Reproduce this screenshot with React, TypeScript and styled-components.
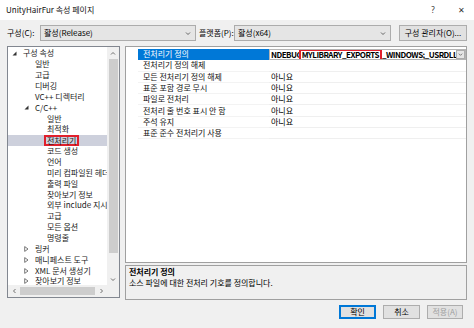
import React from "react";
import styled, { createGlobalStyle } from "styled-components";

const Global = createGlobalStyle`
  html, body { margin: 0; padding: 0; background: #f0f0f0; }
  body {
    font-family: "Noto Sans CJK KR", "Noto Sans", sans-serif;
    font-size: 8px;
    color: #000;
  }
  * { box-sizing: border-box; }
`;

const Window = styled.div`
  width: 474px;
  height: 328px;
  display: flex;
  flex-direction: column;
  background: #f0f0f0;
  overflow: hidden;
`;

const TitleBar = styled.div`
  height: 20px;
  flex-shrink: 0;
  background: #fff;
  display: flex;
  align-items: center;
  padding: 0 6px 0 6px;
  line-height: 10px;
`;

const Title = styled.span`
  flex: 1;
  color: #111;
`;

const CaptionButton = styled.span<{ $w: number }>`
  width: ${(p) => p.$w}px;
  text-align: center;
  color: #333;
  font-family: "Noto Sans", sans-serif;
  font-size: 8px;
`;

const Body = styled.div`
  flex: 1;
  display: flex;
  flex-direction: column;
  padding: 5px 7px 0 7px;
`;

const ConfigRow = styled.div`
  height: 16px;
  display: flex;
  align-items: center;
  line-height: 10px;
`;

const Label = styled.span<{ $w: number }>`
  width: ${(p) => p.$w}px;
  white-space: nowrap;
`;

const Select = styled.div<{ $w: number }>`
  width: ${(p) => p.$w}px;
  height: 16px;
  background: #e5e5e5;
  border: 1px solid #acacac;
  display: flex;
  align-items: center;
  padding: 0 4px 0 3px;
`;

const SelectText = styled.span`
  flex: 1;
`;

const PushButton = styled.div<{ $w: number; $default?: boolean; $disabled?: boolean }>`
  width: ${(p) => p.$w}px;
  height: ${(p) => (p.$w > 50 ? 16 : 14)}px;
  background: #e1e1e1;
  border: 1px solid ${(p) => (p.$default ? "#0078d7" : "#adadad")};
  box-shadow: ${(p) => (p.$default ? "inset 0 0 0 1px #0078d7" : "none")};
  color: ${(p) => (p.$disabled ? "#a0a0a0" : "#000")};
  display: flex;
  align-items: center;
  justify-content: center;
  line-height: 10px;
  white-space: nowrap;
`;

const Main = styled.div`
  margin-top: 5px;
  height: 254px;
  display: flex;
  gap: 5px;
`;

const Tree = styled.div`
  width: 113px;
  height: 252px;
  background: #fff;
  border: 1px solid #828790;
  display: grid;
  grid-template-columns: 1fr 12px;
  grid-template-rows: 1fr 12px;
`;

const TreeList = styled.div`
  overflow: hidden;
  padding-top: 1px;
`;

const TreeRow = styled.div<{ $level: number; $selected?: boolean }>`
  height: 10.86px;
  display: flex;
  align-items: center;
  padding-left: ${(p) => 4 + p.$level * 12}px;
  white-space: nowrap;
  background: ${(p) => (p.$selected ? "#cdd0dc" : "transparent")};
  color: #1a1a1a;
  line-height: 10px;
`;

const Expander = styled.span`
  width: 11px;
  flex-shrink: 0;
  display: flex;
  align-items: center;
`;

const Marked = styled.span`
  border: 2px solid #e0202c;
  padding: 0 1px;
  margin-left: -3px;
  line-height: 7px;
  height: 11px;
  display: inline-flex;
  align-items: center;
`;

const VScroll = styled.div`
  background: #f0f0f0;
  display: flex;
  flex-direction: column;
`;

const HScroll = styled.div`
  background: #f0f0f0;
  display: flex;
  align-items: center;
`;

const Corner = styled.div`
  background: #f0f0f0;
`;

const ArrowBox = styled.div`
  width: 12px;
  height: 12px;
  flex-shrink: 0;
  display: flex;
  align-items: center;
  justify-content: center;
`;

const VTrack = styled.div`
  flex: 1;
  display: flex;
  flex-direction: column;
  align-items: center;
`;

const VThumb = styled.div`
  width: 9px;
  height: 194px;
  background: #cdcdcd;
`;

const HTrack = styled.div`
  flex: 1;
  display: flex;
  align-items: center;
`;

const HThumb = styled.div`
  width: 75px;
  height: 8px;
  background: #cdcdcd;
`;

const RightCol = styled.div`
  flex: 1;
  display: flex;
  flex-direction: column;
  gap: 2px;
`;

const Grid = styled.div`
  height: 217px;
  background: #fff;
  border: 1px solid #a0a0a0;
  padding-top: 2px;
  display: flex;
  flex-direction: column;
`;

const PropRow = styled.div`
  height: 11.3px;
  display: grid;
  grid-template-columns: 12px 131px 1fr;
  line-height: 10px;
`;

const Margin = styled.div``;

const NameCell = styled.div<{ $selected?: boolean }>`
  padding-left: 5px;
  display: flex;
  align-items: center;
  white-space: nowrap;
  overflow: hidden;
  background: ${(p) => (p.$selected ? "#0078d7" : "transparent")};
  color: ${(p) => (p.$selected ? "#fff" : "#111")};
  border-bottom: 1px solid ${(p) => (p.$selected ? "#0078d7" : "#f3f3f3")};
`;

const ValueCell = styled.div<{ $editing?: boolean }>`
  padding-left: 2px;
  display: flex;
  align-items: center;
  white-space: nowrap;
  overflow: hidden;
  border-bottom: 1px solid #efefef;
  ${(p) =>
    p.$editing
      ? `border: 1px solid #b4b4b4; padding-left: 1px; font-weight: bold; letter-spacing: -0.5px;`
      : ""}
`;

const ValueText = styled.span`
  flex: 1;
  overflow: hidden;
  display: flex;
  align-items: center;
`;

const RedBox = styled.span`
  border: 2px solid #e0202c;
  margin-left: -3px;
  padding: 0 1px;
  height: 12px;
  display: inline-flex;
  align-items: center;
  background: #fff;
`;

const DropButton = styled.span`
  width: 9px;
  height: 9px;
  flex-shrink: 0;
  background: #e5e5e5;
  border: 1px solid #acacac;
  display: flex;
  align-items: center;
  justify-content: center;
`;

const Desc = styled.div`
  height: 35px;
  border: 1px solid #a0a0a0;
  padding: 0 3px;
  line-height: 11px;
`;

const DescTitle = styled.div`
  font-weight: bold;
`;

const ButtonRow = styled.div`
  margin-top: 5px;
  padding-right: 4px;
  display: flex;
  justify-content: flex-end;
  gap: 7px;
`;

const Chevron = ({ dir, w = 6, color = "#555" }: { dir: "up" | "down" | "left" | "right"; w?: number; color?: string }) => {
  const pts: Record<string, string> = {
    down: "1,1.5 3,3.5 5,1.5",
    up: "1,3.5 3,1.5 5,3.5",
    left: "3.5,1 1.5,3 3.5,5",
    right: "1.5,1 3.5,3 1.5,5",
  };
  const vert = dir === "up" || dir === "down";
  return (
    <svg width={vert ? w : 5} height={vert ? 5 : w} viewBox={vert ? "0 0 6 5" : "0 0 5 6"}>
      <polyline points={pts[dir]} fill="none" stroke={color} strokeWidth="0.9" />
    </svg>
  );
};

const Tri = ({ open }: { open: boolean }) =>
  open ? (
    <svg width="5" height="5" viewBox="0 0 5 5">
      <polygon points="4.5,0.5 4.5,4.5 0.5,4.5" fill="#333" />
    </svg>
  ) : (
    <svg width="5" height="6" viewBox="0 0 5 6">
      <polygon points="0.7,0.6 4,3 0.7,5.4" fill="none" stroke="#555" strokeWidth="0.8" />
    </svg>
  );

type Item = { text: string; level: number; exp?: "open" | "closed"; selected?: boolean };

const items: Item[] = [
  { text: "구성 속성", level: 0, exp: "open" },
  { text: "일반", level: 1 },
  { text: "고급", level: 1 },
  { text: "디버깅", level: 1 },
  { text: "VC++ 디렉터리", level: 1 },
  { text: "C/C++", level: 1, exp: "open" },
  { text: "일반", level: 2 },
  { text: "최적화", level: 2 },
  { text: "전처리기", level: 2, selected: true },
  { text: "코드 생성", level: 2 },
  { text: "언어", level: 2 },
  { text: "미리 컴파일된 헤더", level: 2 },
  { text: "출력 파일", level: 2 },
  { text: "찾아보기 정보", level: 2 },
  { text: "외부 include 지시문", level: 2 },
  { text: "고급", level: 2 },
  { text: "모든 옵션", level: 2 },
  { text: "명령줄", level: 2 },
  { text: "링커", level: 1, exp: "closed" },
  { text: "매니페스트 도구", level: 1, exp: "closed" },
  { text: "XML 문서 생성기", level: 1, exp: "closed" },
  { text: "찾아보기 정보", level: 1, exp: "closed" },
];

const props: { name: string; value?: string }[] = [
  { name: "전처리기 정의 해제" },
  { name: "모든 전처리기 정의 해제", value: "아니요" },
  { name: "표준 포함 경로 무시", value: "아니요" },
  { name: "파일로 전처리", value: "아니요" },
  { name: "전처리 줄 번호 표시 안 함", value: "아니요" },
  { name: "주석 유지", value: "아니요" },
  { name: "표준 준수 전처리기 사용" },
];

export default function App() {
  return (
    <Window>
      <Global />
      <TitleBar>
        <Title>UnityHairFur 속성 페이지</Title>
        <CaptionButton $w={14}>?</CaptionButton>
        <CaptionButton $w={14} style={{ marginLeft: 14 }}>✕</CaptionButton>
      </TitleBar>
      <Body>
        <ConfigRow>
          <Label $w={33}>구성(C):</Label>
          <Select $w={156}>
            <SelectText>활성(Release)</SelectText>
            <Chevron dir="down" />
          </Select>
          <Label $w={38} style={{ paddingLeft: 3 }}>플랫폼(P):</Label>
          <Select $w={157}>
            <SelectText>활성(x64)</SelectText>
            <Chevron dir="down" />
          </Select>
          <div style={{ flex: 1 }} />
          <PushButton $w={68}>구성 관리자(O)...</PushButton>
        </ConfigRow>
        <Main>
          <Tree>
            <TreeList>
              {items.map((it, i) => (
                <TreeRow key={i} $level={it.level} $selected={it.selected}>
                  <Expander>{it.exp ? <Tri open={it.exp === "open"} /> : null}</Expander>
                  {it.selected ? <Marked>{it.text}</Marked> : <span>{it.text}</span>}
                </TreeRow>
              ))}
            </TreeList>
            <VScroll>
              <ArrowBox>
                <Chevron dir="up" w={6} color="#606060" />
              </ArrowBox>
              <VTrack>
                <VThumb />
              </VTrack>
              <ArrowBox>
                <Chevron dir="down" w={6} color="#606060" />
              </ArrowBox>
            </VScroll>
            <HScroll>
              <ArrowBox>
                <Chevron dir="left" w={6} color="#606060" />
              </ArrowBox>
              <HTrack>
                <HThumb />
              </HTrack>
              <ArrowBox>
                <Chevron dir="right" w={6} color="#606060" />
              </ArrowBox>
            </HScroll>
            <Corner />
          </Tree>
          <RightCol>
            <Grid>
              <PropRow>
                <Margin />
                <NameCell $selected>전처리기 정의</NameCell>
                <ValueCell $editing>
                  <ValueText>
                    NDEBUG
                    <RedBox>MYLIBRARY_EXPORTS</RedBox>
                    _WINDOWS;_USRDLL;%(PreprocessorDefinitions)
                  </ValueText>
                  <DropButton>
                    <Chevron dir="down" w={5} color="#555" />
                  </DropButton>
                </ValueCell>
              </PropRow>
              {props.map((p, i) => (
                <PropRow key={i}>
                  <Margin />
                  <NameCell>{p.name}</NameCell>
                  <ValueCell>{p.value ?? ""}</ValueCell>
                </PropRow>
              ))}
            </Grid>
            <Desc>
              <DescTitle>전처리기 정의</DescTitle>
              <div>소스 파일에 대한 전처리 기호를 정의합니다.</div>
            </Desc>
          </RightCol>
        </Main>
        <ButtonRow>
          <PushButton $w={37} $default>확인</PushButton>
          <PushButton $w={37}>취소</PushButton>
          <PushButton $w={36} $disabled>적용(A)</PushButton>
        </ButtonRow>
      </Body>
    </Window>
  );
}
